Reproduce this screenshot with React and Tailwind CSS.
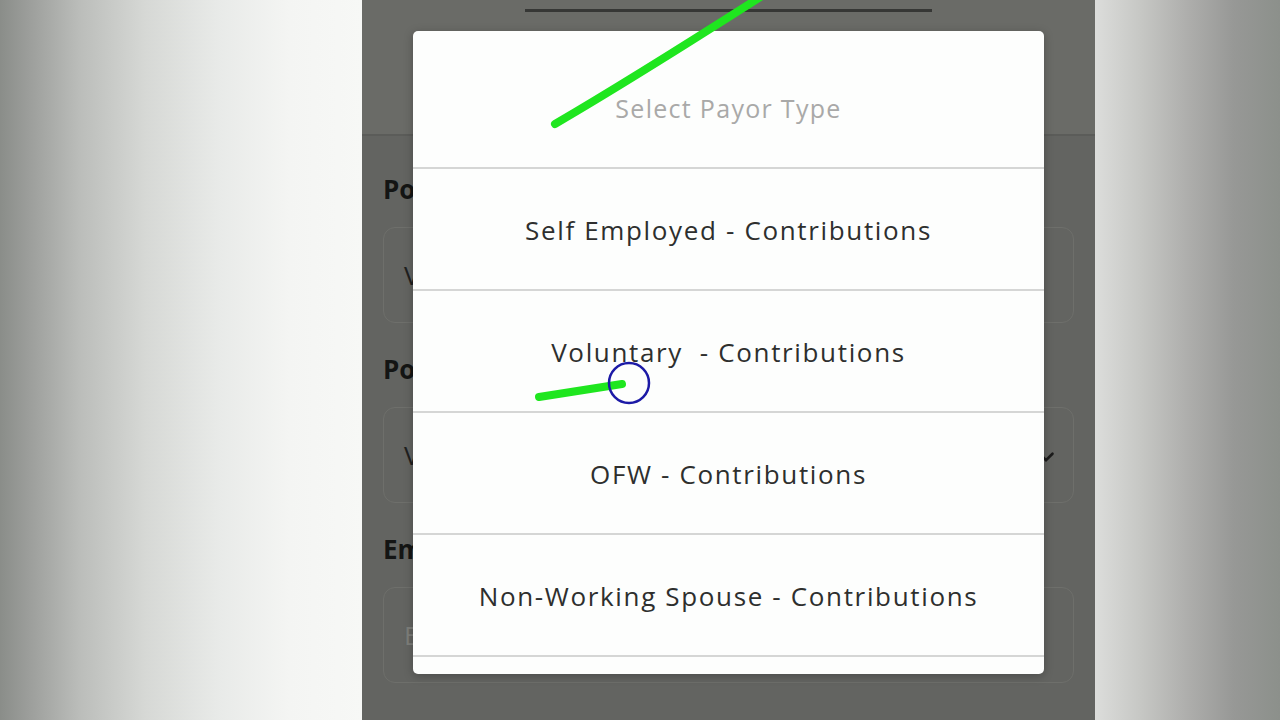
import React from 'react'

const options = [
  'Self Employed - Contributions',
  'Voluntary  - Contributions',
  'OFW - Contributions',
  'Non-Working Spouse - Contributions',
  '',
]

function FormField({ label, value, placeholder, chevron }) {
  return (
    <div className="flex flex-col">
      <div className="h-[40px] flex items-center text-[26px] font-bold text-[#141514]">{label}</div>
      <div className="mt-[18px] h-[96px] rounded-[12px] border border-[#6e6f6b] flex items-center justify-between pl-[20px] pr-[14px]">
        <span className={value ? 'text-[26px] text-[#1f201f]' : 'text-[26px] text-[#7d7e7a]'}>{value || placeholder}</span>
        {chevron && (
          <svg viewBox="0 0 24 24" className="w-[26px] h-[26px] mt-[4px]" fill="none" stroke="#1b1b1b" strokeWidth="2.4" strokeLinecap="round">
            <path d="M6 9l6 6 6-6" />
          </svg>
        )}
      </div>
    </div>
  )
}

function PhoneBackdrop() {
  return (
    <div className="h-full flex flex-col bg-[#636461]" style={{ fontFamily: '"Open Sans", "Liberation Sans", sans-serif' }}>
      {/* dimmed header card */}
      <div className="h-[136px] bg-[#6a6b67] border-b-2 border-[#5b5c59] flex justify-center">
        <div className="mt-[9px] w-[407px] h-[3px] bg-[#363735]" />
      </div>
      <div className="px-[21px] pt-[33px] flex flex-col gap-[26px]">
        <FormField label="Position" value="Voluntary" />
        <FormField label="Position Type" value="Voluntary" chevron />
        <FormField label="Email" placeholder="Email" />
      </div>
    </div>
  )
}

function PayorModal() {
  return (
    <div
      className="absolute left-[51px] top-[31px] w-[631px] h-[643px] rounded-[5px] overflow-hidden bg-[#fdfefd] shadow-[0_2px_10px_rgba(0,0,0,0.25)]"
      style={{ fontFamily: '"Open Sans", "Liberation Sans", sans-serif' }}
    >
      <div className="h-[138px] border-b-2 border-[#d5d6d5] flex justify-center pt-[59px]">
        <span className="text-[25px] leading-[36px] tracking-[1.3px] text-[#a9a9a8]">Select Payor Type</span>
      </div>
      {options.map((o, i) => (
        <div key={i} className="h-[122px] border-b-2 border-[#d5d6d5] flex items-center justify-center pt-[2px]">
          <span className="text-[26px] leading-[36px] tracking-[1.65px] text-[#2e2f2e] whitespace-pre">{o}</span>
        </div>
      ))}
    </div>
  )
}

export default function App() {
  return (
    <div className="relative w-[1280px] h-[720px] overflow-hidden flex">
      <div className="w-[362px] h-full bg-[linear-gradient(to_right,#8a8d89_0%,#9c9e9b_8%,#bbbdba_22%,#d6d8d5_40%,#e8eae8_60%,#f4f5f3_80%,#f7f8f6_100%)]" />
      <div className="relative w-[733px] h-full">
        <PhoneBackdrop />
        <PayorModal />
      </div>
      <div className="flex-1 h-full bg-[linear-gradient(to_right,#dcdddb_0%,#c6c7c4_25%,#aeaeac_50%,#979896_75%,#8c908b_100%)]" />

      {/* screen-recording touch traces */}
      <svg className="absolute inset-0 w-[1280px] h-[720px] pointer-events-none" viewBox="0 0 1280 720">
        <path d="M555 124 C 620 86, 690 42, 765 -6" stroke="#1fe61f" strokeWidth="8" strokeLinecap="round" fill="none" />
        <path d="M539 397 L 622 384" stroke="#1fe61f" strokeWidth="8" strokeLinecap="round" fill="none" />
        <circle cx="629" cy="383" r="20" stroke="#1c1aa6" strokeWidth="2.5" fill="none" />
      </svg>
    </div>
  )
}
